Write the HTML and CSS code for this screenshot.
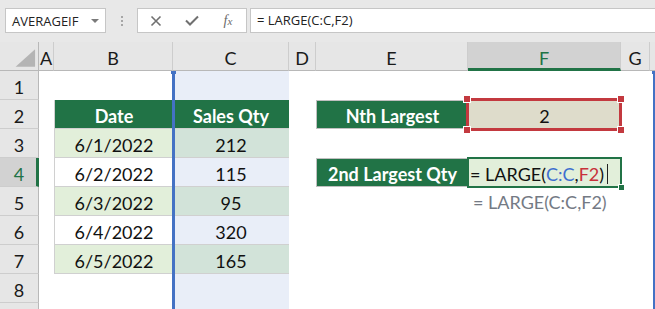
FILE: index.html
```html
<!DOCTYPE html>
<html lang="en">
<head>
    <meta charset="UTF-8">
    <title>LARGE - Excel</title>
    <link rel="stylesheet" href="styles.css">
</head>
<body>
    <div class="toolbar">
        <div class="namebox">
            <span>AVERAGEIF</span>
            <span class="caret"></span>
        </div>
        <div class="grip"><i></i><i></i><i></i></div>
        <div class="fx-buttons">
            <svg width="12" height="12" viewBox="0 0 12 12"><path d="M1.5 1.5 L10.5 10.5 M10.5 1.5 L1.5 10.5" stroke="#707070" stroke-width="1.6" fill="none"/></svg>
            <svg width="14" height="11" viewBox="0 0 14 11"><path d="M1 5.5 L5 9.5 L13 1.5" stroke="#707070" stroke-width="2" fill="none"/></svg>
            <span class="fx"><i>f</i><span>x</span></span>
        </div>
        <div class="formula">= LARGE(C:C,F2)</div>
    </div>

    <div class="sheet">
        <!-- column headers -->
        <div class="colhead corner">
            <svg width="39" height="29" viewBox="0 0 39 29"><polygon points="36,7 36,25 16,25" fill="#B4B4B4"/></svg>
        </div>
        <div class="colhead">A</div>
        <div class="colhead">B</div>
        <div class="colhead">C</div>
        <div class="colhead">D</div>
        <div class="colhead">E</div>
        <div class="colhead active">F</div>
        <div class="colhead">G</div>
        <div class="colhead last"></div>

        <!-- row 1 -->
        <div class="rowhead">1</div>
        <div class="cell"></div><div class="cell"></div><div class="cell csel"></div>
        <div class="cell"></div><div class="cell"></div><div class="cell"></div><div class="cell"></div><div class="cell"></div>

        <!-- row 2 -->
        <div class="rowhead">2</div>
        <div class="cell"></div>
        <div class="cell tbl head first">Date</div>
        <div class="cell tbl head">Sales Qty</div>
        <div class="cell"></div>
        <div class="cell label">Nth Largest</div>
        <div class="cell ref">
            2
            <span class="h tl"></span><span class="h tr"></span><span class="h bl"></span><span class="h br"></span>
        </div>
        <div class="cell"></div><div class="cell"></div>

        <!-- row 3 -->
        <div class="rowhead">3</div>
        <div class="cell"></div>
        <div class="cell tbl band first">6/1/2022</div>
        <div class="cell tbl band csel">212</div>
        <div class="cell"></div><div class="cell"></div><div class="cell"></div><div class="cell"></div><div class="cell"></div>

        <!-- row 4 -->
        <div class="rowhead active">4</div>
        <div class="cell"></div>
        <div class="cell tbl first">6/2/2022</div>
        <div class="cell tbl csel">115</div>
        <div class="cell"></div>
        <div class="cell label">2nd Largest Qty</div>
        <div class="cell editing">= LARGE(<span class="r-blue">C:C</span>,<span class="r-red">F2</span>)<span class="cursor"></span></div>
        <div class="cell"></div><div class="cell"></div>

        <!-- row 5 -->
        <div class="rowhead">5</div>
        <div class="cell"></div>
        <div class="cell tbl band first">6/3/2022</div>
        <div class="cell tbl band csel">95</div>
        <div class="cell"></div><div class="cell"></div>
        <div class="cell tip">= LARGE(C:C,F2)</div>
        <div class="cell"></div><div class="cell"></div>

        <!-- row 6 -->
        <div class="rowhead">6</div>
        <div class="cell"></div>
        <div class="cell tbl first">6/4/2022</div>
        <div class="cell tbl csel">320</div>
        <div class="cell"></div><div class="cell"></div><div class="cell"></div><div class="cell"></div><div class="cell"></div>

        <!-- row 7 -->
        <div class="rowhead">7</div>
        <div class="cell"></div>
        <div class="cell tbl band first">6/5/2022</div>
        <div class="cell tbl band csel">165</div>
        <div class="cell"></div><div class="cell"></div><div class="cell"></div><div class="cell"></div><div class="cell"></div>

        <!-- row 8 -->
        <div class="rowhead">8</div>
        <div class="cell"></div><div class="cell"></div><div class="cell csel"></div>
        <div class="cell"></div><div class="cell"></div><div class="cell"></div><div class="cell"></div><div class="cell"></div>

        <!-- row 9, only its top edge is in view -->
        <div class="rowhead"></div>
        <div class="cell"></div><div class="cell"></div><div class="cell csel"></div>
        <div class="cell"></div><div class="cell"></div><div class="cell"></div><div class="cell"></div><div class="cell"></div>

        <!-- selected column C -->
        <div class="col-sel"></div>
    </div>
</body>
</html>
```

FILE: styles.css
```css
body {
    margin: 0;
    width: 655px;
    height: 309px;
    overflow: hidden;
    background: #fff;
    font-family: Lato, "Open Sans", sans-serif;
}

/* formula bar */
.toolbar {
    display: flex;
    align-items: flex-start;
    height: 42px;
    padding-top: 8px;
    box-sizing: border-box;
    background: #e8e8e8;
    font-family: "Open Sans", sans-serif;
    font-size: 13px;
    color: #222;
}
.namebox {
    margin-left: 5px;
    width: 101px;
    height: 25px;
    box-sizing: border-box;
    border: 1px solid #c6c6c6;
    background: #fff;
    display: flex;
    align-items: center;
    justify-content: space-between;
    padding: 0 6px 0 6px;
}
.caret {
    border-left: 4px solid transparent;
    border-right: 4px solid transparent;
    border-top: 4px solid #7a7a7a;
}
.grip {
    display: flex;
    flex-direction: column;
    gap: 2px;
    margin: 8px 14px 0 15px;
}
.grip i {
    width: 2px;
    height: 2px;
    background: #a6a6a6;
}
.fx-buttons {
    width: 110px;
    height: 25px;
    box-sizing: border-box;
    border: 1px solid #c6c6c6;
    background: #fff;
    display: grid;
    grid-template-columns: repeat(3, 36px);
    justify-items: center;
    align-items: center;
}
.fx {
    font-family: "Liberation Serif", serif;
    color: #6a6a6a;
    font-size: 14px;
}
.fx span {
    font-size: 11px;
    font-style: italic;
}
.formula {
    flex: 1;
    margin-left: 3px;
    height: 25px;
    box-sizing: border-box;
    border: 1px solid #c6c6c6;
    border-right: none;
    background: #fff;
    padding-left: 6px;
    line-height: 23px;
}

/* sheet */
.sheet {
    position: relative;
    display: grid;
    grid-template-columns: 39px 15px 119px 116px 27px 152px 153px 29px 1fr;
    grid-template-rows: repeat(10, 29px);
    font-size: 18px;
    color: #111;
}
.colhead {
    background: #e6e6e6;
    border-right: 1px solid #cdcdcd;
    border-bottom: 1px solid #b8b8b8;
    display: flex;
    align-items: center;
    justify-content: center;
    padding-top: 3px;
    color: #1a1a1a;
}
.colhead.corner {
    border-right: 1px solid #b8b8b8;
    padding-top: 0;
}
.colhead.last {
    border-right: none;
}
.colhead.active {
    background: #d2d2d2;
    color: #217346;
    border-bottom: 3px solid #217346;
    padding-top: 5px;
}
.rowhead {
    background: #e6e6e6;
    border-right: 1px solid #b8b8b8;
    border-bottom: 1px solid #cdcdcd;
    display: flex;
    align-items: center;
    justify-content: center;
    padding-top: 3px;
    color: #1a1a1a;
}
.rowhead.active {
    background: #d2d2d2;
    color: #217346;
    border-right: 3px solid #217346;
    padding-left: 2px;
}
.cell {
    position: relative;
    display: flex;
    align-items: center;
    justify-content: center;
    padding-top: 3px;
    white-space: nowrap;
}
.csel {
    background: #e9eef8;
}

/* table B2:C7 */
.tbl {
    border-bottom: 1px solid #d0d0d0;
}
.tbl.first {
    border-left: 1px solid #d0d0d0;
}
.tbl.head {
    background: #217346;
    color: #fff;
    font-weight: bold;
}
.tbl.band {
    background: #e2efda;
}
.tbl.band.csel {
    background: #d2e3d9;
}
.tbl.csel:not(.band) {
    background: #e9eef8;
}

/* labels and F column */
.label {
    background: #217346;
    color: #fff;
    font-weight: bold;
    border: 1px solid #c0c0c0;
    border-right: none;
}
.ref {
    background: #dedccb;
}
.ref::after {
    content: "";
    position: absolute;
    inset: -2px -1px -2px -2px;
    border: 3px solid #c3393f;
}
.h {
    position: absolute;
    width: 6px;
    height: 6px;
    background: #c3393f;
    outline: 1px solid #fff;
    z-index: 2;
}
.h.tl { left: -4px; top: -4px; }
.h.tr { right: -3px; top: -4px; }
.h.bl { left: -4px; bottom: -4px; }
.h.br { right: -3px; bottom: -4px; }

.editing {
    justify-content: flex-start;
    padding-left: 2px;
    background: #e2efda;
    box-shadow: 0 0 0 1px #217346, inset 0 0 0 1px #217346;
    z-index: 1;
}
.editing::after {
    content: "";
    position: absolute;
    right: -3px;
    bottom: -3px;
    width: 5px;
    height: 5px;
    background: #217346;
    outline: 1px solid #fff;
}
.r-blue {
    color: #3e6fcf;
}
.r-red {
    color: #c8323b;
}
.cursor {
    display: inline-block;
    width: 1px;
    height: 20px;
    margin-left: 3px;
    background: #222;
}
.tip {
    justify-content: flex-start;
    padding-left: 5px;
    padding-top: 1px;
    color: #747a84;
}

/* selected column C */
.col-sel {
    position: absolute;
    grid-column: 4;
    grid-row: 2 / 11;
    top: 0;
    bottom: 0;
    left: -1px;
    right: -1px;
    border-left: 3px solid #4472c4;
    border-right: 3px solid #4472c4;
    pointer-events: none;
}
.col-sel::before,
.col-sel::after {
    content: "";
    position: absolute;
    top: 0;
    width: 5px;
    height: 3px;
    background: #4472c4;
}
.col-sel::before { left: -4px; }
.col-sel::after { right: -4px; }
```
